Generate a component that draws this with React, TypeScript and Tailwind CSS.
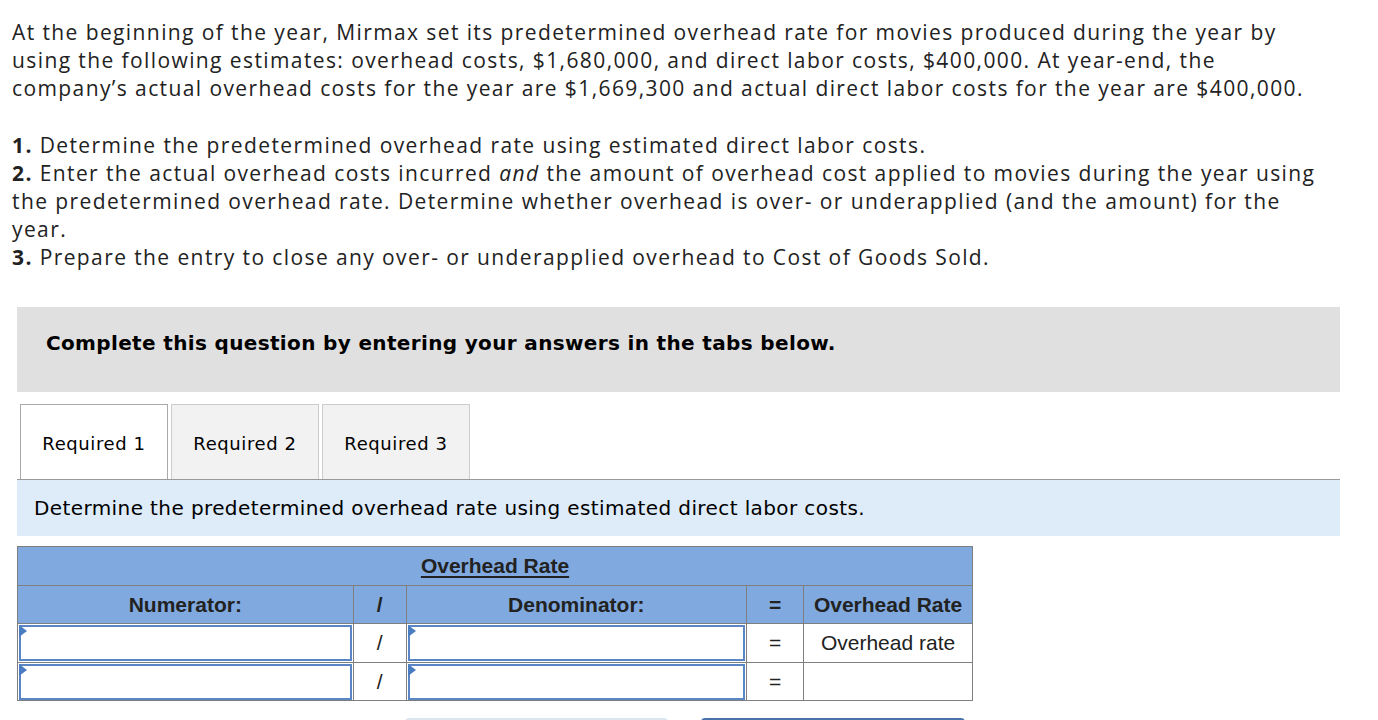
import React from "react";

const bodyFont = { fontFamily: '"Open Sans", "Liberation Sans", sans-serif' };

function InputCell() {
  return (
    <td className="relative border border-[#7f7f7f] p-0 bg-white">
      <div className="relative mx-[1px] h-[36px] border-2 border-[#5a86c5] bg-white">
        <span className="absolute left-[-2px] top-[-2px] h-0 w-0 border-y-[6px] border-l-[8px] border-y-transparent border-l-[#4a7cc1]" />
      </div>
    </td>
  );
}

export default function App() {
  return (
    <div className="w-[1378px] h-[720px] overflow-hidden bg-white text-[#222]">
      <div
        className="whitespace-nowrap pl-[12px] pt-[18px] text-[21px] leading-[28px] tracking-[1.4px]"
        style={bodyFont}
      >
        <p>
          At the beginning of the year, Mirmax set its predetermined overhead rate for movies produced during the year by
          <br />
          using the following estimates: overhead costs, $1,680,000, and direct labor costs, $400,000. At year-end, the
          <br />
          company’s actual overhead costs for the year are $1,669,300 and actual direct labor costs for the year are $400,000.
        </p>
        <p className="mt-[29px]">
          <b>1.</b> Determine the predetermined overhead rate using estimated direct labor costs.
          <br />
          <b>2.</b> Enter the actual overhead costs incurred <i>and</i> the amount of overhead cost applied to movies during the year using
          <br />
          the predetermined overhead rate. Determine whether overhead is over- or underapplied (and the amount) for the
          <br />
          year.
          <br />
          <b>3.</b> Prepare the entry to close any over- or underapplied overhead to Cost of Goods Sold.
        </p>
      </div>

      <div className="mx-[17px] w-[1323px]" style={{ fontFamily: '"DejaVu Sans", Verdana, sans-serif' }}>
        <div className="mt-[36px] h-[85px] bg-[#e0e0e0] pl-[29px] pt-[23px]">
          <p className="text-[20px] font-bold leading-[26px] tracking-[0.35px] text-black">
            Complete this question by entering your answers in the tabs below.
          </p>
        </div>

        <div className="mt-[12px] flex gap-[3px] border-b border-[#999] pl-[3px]">
          <div className="flex h-[75px] w-[148px] items-center justify-center border border-b-0 border-[#aaa] bg-white pt-[2px] text-[18px] tracking-[0.6px] text-black">
            Required 1
          </div>
          <div className="flex h-[75px] w-[148px] items-center justify-center border border-b-0 border-[#ccc] bg-[#f2f2f2] pt-[2px] text-[18px] tracking-[0.6px] text-black">
            Required 2
          </div>
          <div className="flex h-[75px] w-[148px] items-center justify-center border border-b-0 border-[#ccc] bg-[#f2f2f2] pt-[2px] text-[18px] tracking-[0.6px] text-black">
            Required 3
          </div>
        </div>

        <div className="flex h-[56px] items-center bg-[#deebf8] pl-[17px] text-[20px] tracking-[0.4px] text-black">
          Determine the predetermined overhead rate using estimated direct labor costs.
        </div>
      </div>

      <table
        className="ml-[17px] mt-[10px] w-[956px] border-collapse text-[21px] text-[#222]"
        style={{ fontFamily: '"Liberation Sans", Arial, sans-serif' }}
      >
        <colgroup>
          <col className="w-[336px]" />
          <col className="w-[53px]" />
          <col className="w-[341px]" />
          <col className="w-[57px]" />
          <col className="w-[169px]" />
        </colgroup>
        <tbody>
          <tr className="h-[39px] bg-[#80aadf]">
            <td colSpan={5} className="border border-[#7f7f7f] text-center font-bold">
              <span className="underline underline-offset-[3px]">Overhead Rate</span>
            </td>
          </tr>
          <tr className="h-[38px] bg-[#80aadf] font-bold">
            <td className="border border-[#7f7f7f] text-center">Numerator:</td>
            <td className="border border-[#7f7f7f] text-center">/</td>
            <td className="border border-[#7f7f7f] text-center">Denominator:</td>
            <td className="border border-[#7f7f7f] text-center">=</td>
            <td className="border border-[#7f7f7f] text-center">Overhead Rate</td>
          </tr>
          <tr className="h-[39px]">
            <InputCell />
            <td className="border border-[#7f7f7f] text-center">/</td>
            <InputCell />
            <td className="border border-[#7f7f7f] text-center">=</td>
            <td className="border border-[#7f7f7f] text-center">Overhead rate</td>
          </tr>
          <tr className="h-[38px]">
            <InputCell />
            <td className="border border-[#7f7f7f] text-center">/</td>
            <InputCell />
            <td className="border border-[#7f7f7f] text-center">=</td>
            <td className="border border-[#7f7f7f] text-center"></td>
          </tr>
        </tbody>
      </table>

      <div className="mt-[17px] flex gap-[33px] pl-[405px]">
        <div className="h-[20px] w-[263px] rounded-t-[4px] bg-[#dce6f1]" />
        <div className="h-[20px] w-[264px] rounded-t-[4px] bg-[#4a72aa]" />
      </div>
    </div>
  );
}
